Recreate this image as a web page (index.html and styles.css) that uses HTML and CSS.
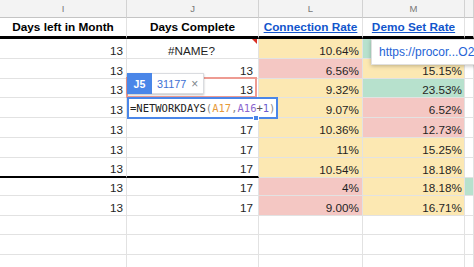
FILE: index.html
```html
<!DOCTYPE html>
<html>
<head>
<meta charset="utf-8">
<title>Sheet</title>
<link rel="stylesheet" href="styles.css">
</head>
<body>
<div class="sheet">
  <div class="row hdr">
    <div class="c">I</div><div class="c">J</div><div class="c">L</div><div class="c">M</div><div class="c"></div>
  </div>
  <div class="row title">
    <div class="c ctr b">Days left in Month</div>
    <div class="c ctr b">Days Complete</div>
    <div class="c ctr b"><span class="link">Connection Rate</span></div>
    <div class="c ctr b"><span class="link">Demo Set Rate</span></div>
    <div class="c"></div>
  </div>
  <div class="row h20">
    <div class="c ci">13</div>
    <div class="c cj ctr err">#NAME?<span class="tri"></span></div>
    <div class="c cl y">10.64%</div>
    <div class="c cm g"></div>
    <div class="c"></div>
  </div>
  <div class="row h20">
    <div class="c ci">13</div>
    <div class="c cj">13</div>
    <div class="c cl r">6.56%</div>
    <div class="c cm y">15.15%</div>
    <div class="c"></div>
  </div>
  <div class="row h19">
    <div class="c ci">13</div>
    <div class="c cj">13</div>
    <div class="c cl y">9.32%</div>
    <div class="c cm g">23.53%</div>
    <div class="c"></div>
  </div>
  <div class="row h20">
    <div class="c ci">13</div>
    <div class="c cj"></div>
    <div class="c cl y">9.07%</div>
    <div class="c cm r">6.52%</div>
    <div class="c"></div>
  </div>
  <div class="row h20">
    <div class="c ci">13</div>
    <div class="c cj">17</div>
    <div class="c cl y">10.36%</div>
    <div class="c cm r">12.73%</div>
    <div class="c"></div>
  </div>
  <div class="row h20">
    <div class="c ci">13</div>
    <div class="c cj">17</div>
    <div class="c cl y">11%</div>
    <div class="c cm y">15.25%</div>
    <div class="c"></div>
  </div>
  <div class="row h20">
    <div class="c ci thick">13</div>
    <div class="c cj thick">17</div>
    <div class="c cl y">10.54%</div>
    <div class="c cm y">18.18%</div>
    <div class="c"></div>
  </div>
  <div class="row h18">
    <div class="c ci">13</div>
    <div class="c cj">17</div>
    <div class="c cl r">4%</div>
    <div class="c cm y">18.18%</div>
    <div class="c g"></div>
  </div>
  <div class="row h20">
    <div class="c ci">13</div>
    <div class="c cj">17</div>
    <div class="c cl r">9.00%</div>
    <div class="c cm y">16.71%</div>
    <div class="c"></div>
  </div>
  <div class="row h19">
    <div class="c"></div><div class="c"></div><div class="c"></div><div class="c"></div><div class="c"></div>
  </div>
  <div class="row h20">
    <div class="c"></div><div class="c"></div><div class="c"></div><div class="c"></div><div class="c"></div>
  </div>
  <div class="row h20">
    <div class="c"></div><div class="c"></div><div class="c"></div><div class="c"></div><div class="c"></div>
  </div>

  <div class="refbox"></div>
  <div class="chip"><span class="chip-id">J5</span><span class="chip-val">31177<span class="chip-x">×</span></span></div>
  <div class="editor"><span class="f-fn">=NETWORKDAYS</span><span class="f-par">(</span><span class="f-a17">A17</span><span class="f-par">,</span><span class="f-a16">A16</span><span class="f-op">+</span><span class="f-num">1</span><span class="f-par">)</span></div>
  <div class="handle"></div>
  <div class="tip">https://procor...O2</div>
</div>
</body>
</html>
```

FILE: styles.css
```css
html, body {
  margin: 0;
  padding: 0;
  overflow: hidden;
  background: #fff;
}

.sheet {
  position: relative;
  width: 474px;
  height: 267px;
  overflow: hidden;
  font-family: "Liberation Sans", Arial, sans-serif;
  color: #1f1f1f;
}

.row {
  display: grid;
  grid-template-columns: 127px 132px 104px 102px 1fr;
}

.h18 { height: 18px; }
.h19 { height: 19px; }
.h20 { height: 20px; }

.c {
  box-sizing: border-box;
  position: relative;
  display: flex;
  align-items: flex-end;
  justify-content: flex-end;
  border-right: 1px solid #e2e2e2;
  border-bottom: 1px solid #e2e2e2;
  padding: 0 3px 1px 3px;
  font-size: 11.7px;
  line-height: 13px;
  white-space: nowrap;
  overflow: hidden;
}

.ci { padding-right: 3px; }
.cj { padding-right: 5px; }
.cl { padding-right: 3px; }
.cm { padding-right: 2px; }

.ctr { justify-content: center; }
.b { font-weight: bold; color: #000; }

.err { overflow: visible; }

.y { background: #fce8b2; }
.r { background: #f4c7c3; }
.g { background: #b7e1cd; }

.thick { border-bottom: 2px solid #000; }

/* column header row */
.hdr { height: 18px; background: #f3f3f3; }
.hdr .c {
  align-items: center;
  justify-content: center;
  padding: 0;
  font-size: 9.5px;
  color: #777;
  border-right: 1px solid #d2d2d2;
  border-bottom: 1px solid #c4c4c4;
}

/* title row */
.title { height: 21px; }
.title .c {
  border-bottom: 3px solid #000;
  padding-bottom: 2px;
  font-size: 11.8px;
}

.link {
  color: #1155cc;
  text-decoration: underline;
}

.tri {
  position: absolute;
  top: 0;
  right: 1px;
  width: 0;
  height: 0;
  border-top: 5px solid #d93025;
  border-left: 5px solid transparent;
}

/* J5 reference highlight */
.refbox {
  position: absolute;
  left: 126px;
  top: 77px;
  width: 131px;
  height: 21px;
  box-sizing: border-box;
  border: 2px solid #ee9b92;
}

/* reference chip */
.chip {
  position: absolute;
  left: 127px;
  top: 73px;
  height: 21px;
  display: flex;
  box-shadow: 0 1px 2px rgba(0, 0, 0, 0.25);
}

.chip-id {
  width: 25px;
  display: flex;
  align-items: center;
  justify-content: center;
  background: #4a86e8;
  color: #fff;
  font-weight: bold;
  font-size: 10.6px;
}

.chip-val {
  display: flex;
  align-items: center;
  box-sizing: border-box;
  width: 52px;
  padding-left: 5px;
  background: #fff;
  border: 1px solid #dadce0;
  border-left: none;
  color: #3d6fd3;
  font-size: 10.8px;
}

.chip-x {
  margin-left: 5px;
  color: #80868b;
  font-size: 12px;
}

/* formula editor */
.editor {
  position: absolute;
  left: 127px;
  top: 97px;
  width: 151px;
  height: 22px;
  box-sizing: border-box;
  border: 2px solid #4a86e8;
  background: #fff;
  padding-left: 1px;
  font-family: "DejaVu Sans Mono", "Liberation Mono", monospace;
  font-size: 10.5px;
  line-height: 18px;
  white-space: nowrap;
  color: #222;
}

.f-par { color: #888; }
.f-a17 { color: #e69a3a; }
.f-a16 { color: #8b66cf; }
.f-op { color: #555; }
.f-num { color: #6a5bd0; }

.handle {
  position: absolute;
  left: 253px;
  top: 115px;
  width: 4px;
  height: 4px;
  background: #4a86e8;
  border: 1px solid #fff;
}

/* link tooltip */
.tip {
  position: absolute;
  left: 371px;
  top: 39px;
  width: 140px;
  height: 26px;
  box-sizing: border-box;
  padding-left: 7px;
  background: #fff;
  border: 1px solid #e0e0e0;
  box-shadow: 0 1px 4px rgba(0, 0, 0, 0.25);
  font-size: 12px;
  line-height: 24px;
  color: #2563d6;
  white-space: nowrap;
}
```
